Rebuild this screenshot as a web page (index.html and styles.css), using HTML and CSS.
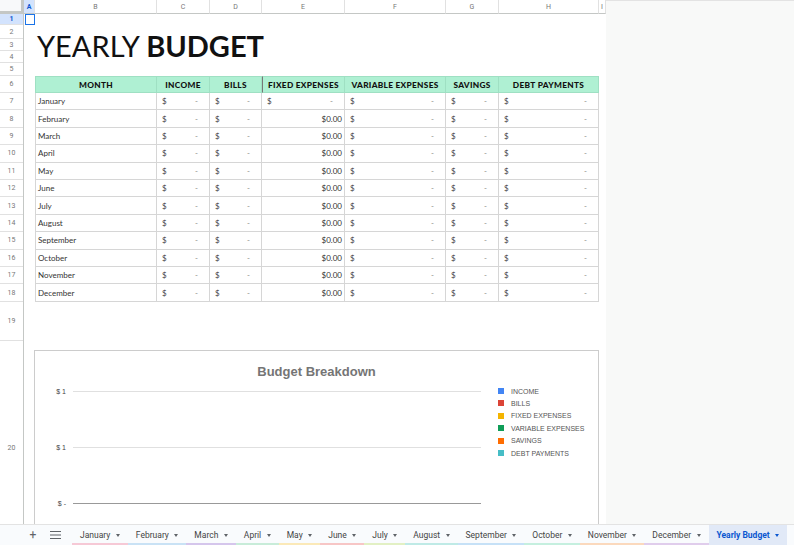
FILE: index.html
```html
<html>
  <head>
    <link rel="stylesheet" href="styles.css">
    <title>Yearly Budget</title>
  </head>
  <body>
    <div class="app">
      <div class="workspace">
        <div class="sheet">
          <div class="colbar">
            <div class="corner"></div>
            <div class="col sel-col" style="width:11px">A</div>
            <div class="col" style="width:122px">B</div>
            <div class="col" style="width:53px">C</div>
            <div class="col" style="width:52px">D</div>
            <div class="col" style="width:83px">E</div>
            <div class="col" style="width:101px">F</div>
            <div class="col" style="width:53px">G</div>
            <div class="col" style="width:100px">H</div>
            <div class="col" style="width:7px">I</div>
          </div>
          <div class="main">
            <div class="rowbar">
              <div class="rh sel-row" style="height:11px">1</div>
              <div class="rh" style="height:14px">2</div>
              <div class="rh" style="height:12px">3</div>
              <div class="rh" style="height:12px">4</div>
              <div class="rh" style="height:13px">5</div>
              <div class="rh" style="height:17px">6</div>
              <div class="rh data-h">7</div>
              <div class="rh data-h">8</div>
              <div class="rh data-h">9</div>
              <div class="rh data-h">10</div>
              <div class="rh data-h">11</div>
              <div class="rh data-h">12</div>
              <div class="rh data-h">13</div>
              <div class="rh data-h">14</div>
              <div class="rh data-h">15</div>
              <div class="rh data-h">16</div>
              <div class="rh data-h">17</div>
              <div class="rh data-h">18</div>
              <div class="rh" style="height:39px">19</div>
              <div class="rh" style="height:216px">20</div>
            </div>
            <div class="content">
              <div class="top">
                <div class="cursor"></div>
                <h1 class="title">YEARLY <b>BUDGET</b></h1>
              </div>

              <div class="budget">
                <div class="row head">
                  <div>MONTH</div><div>INCOME</div><div>BILLS</div><div class="fx">FIXED EXPENSES</div>
                  <div>VARIABLE EXPENSES</div><div>SAVINGS</div><div>DEBT PAYMENTS</div>
                </div>
                <div class="row">
                  <div class="m">January</div>
                  <div class="cur"><span>$</span><span>-</span></div>
                  <div class="cur"><span>$</span><span>-</span></div>
                  <div class="cur"><span>$</span><span>-</span></div>
                  <div class="cur"><span>$</span><span>-</span></div>
                  <div class="cur"><span>$</span><span>-</span></div>
                  <div class="cur"><span>$</span><span>-</span></div>
                </div>
                <div class="row">
                  <div class="m">February</div>
                  <div class="cur"><span>$</span><span>-</span></div>
                  <div class="cur"><span>$</span><span>-</span></div>
                  <div class="amt">$0.00</div>
                  <div class="cur"><span>$</span><span>-</span></div>
                  <div class="cur"><span>$</span><span>-</span></div>
                  <div class="cur"><span>$</span><span>-</span></div>
                </div>
                <div class="row">
                  <div class="m">March</div>
                  <div class="cur"><span>$</span><span>-</span></div>
                  <div class="cur"><span>$</span><span>-</span></div>
                  <div class="amt">$0.00</div>
                  <div class="cur"><span>$</span><span>-</span></div>
                  <div class="cur"><span>$</span><span>-</span></div>
                  <div class="cur"><span>$</span><span>-</span></div>
                </div>
                <div class="row">
                  <div class="m">April</div>
                  <div class="cur"><span>$</span><span>-</span></div>
                  <div class="cur"><span>$</span><span>-</span></div>
                  <div class="amt">$0.00</div>
                  <div class="cur"><span>$</span><span>-</span></div>
                  <div class="cur"><span>$</span><span>-</span></div>
                  <div class="cur"><span>$</span><span>-</span></div>
                </div>
                <div class="row">
                  <div class="m">May</div>
                  <div class="cur"><span>$</span><span>-</span></div>
                  <div class="cur"><span>$</span><span>-</span></div>
                  <div class="amt">$0.00</div>
                  <div class="cur"><span>$</span><span>-</span></div>
                  <div class="cur"><span>$</span><span>-</span></div>
                  <div class="cur"><span>$</span><span>-</span></div>
                </div>
                <div class="row">
                  <div class="m">June</div>
                  <div class="cur"><span>$</span><span>-</span></div>
                  <div class="cur"><span>$</span><span>-</span></div>
                  <div class="amt">$0.00</div>
                  <div class="cur"><span>$</span><span>-</span></div>
                  <div class="cur"><span>$</span><span>-</span></div>
                  <div class="cur"><span>$</span><span>-</span></div>
                </div>
                <div class="row">
                  <div class="m">July</div>
                  <div class="cur"><span>$</span><span>-</span></div>
                  <div class="cur"><span>$</span><span>-</span></div>
                  <div class="amt">$0.00</div>
                  <div class="cur"><span>$</span><span>-</span></div>
                  <div class="cur"><span>$</span><span>-</span></div>
                  <div class="cur"><span>$</span><span>-</span></div>
                </div>
                <div class="row">
                  <div class="m">August</div>
                  <div class="cur"><span>$</span><span>-</span></div>
                  <div class="cur"><span>$</span><span>-</span></div>
                  <div class="amt">$0.00</div>
                  <div class="cur"><span>$</span><span>-</span></div>
                  <div class="cur"><span>$</span><span>-</span></div>
                  <div class="cur"><span>$</span><span>-</span></div>
                </div>
                <div class="row">
                  <div class="m">September</div>
                  <div class="cur"><span>$</span><span>-</span></div>
                  <div class="cur"><span>$</span><span>-</span></div>
                  <div class="amt">$0.00</div>
                  <div class="cur"><span>$</span><span>-</span></div>
                  <div class="cur"><span>$</span><span>-</span></div>
                  <div class="cur"><span>$</span><span>-</span></div>
                </div>
                <div class="row">
                  <div class="m">October</div>
                  <div class="cur"><span>$</span><span>-</span></div>
                  <div class="cur"><span>$</span><span>-</span></div>
                  <div class="amt">$0.00</div>
                  <div class="cur"><span>$</span><span>-</span></div>
                  <div class="cur"><span>$</span><span>-</span></div>
                  <div class="cur"><span>$</span><span>-</span></div>
                </div>
                <div class="row">
                  <div class="m">November</div>
                  <div class="cur"><span>$</span><span>-</span></div>
                  <div class="cur"><span>$</span><span>-</span></div>
                  <div class="amt">$0.00</div>
                  <div class="cur"><span>$</span><span>-</span></div>
                  <div class="cur"><span>$</span><span>-</span></div>
                  <div class="cur"><span>$</span><span>-</span></div>
                </div>
                <div class="row">
                  <div class="m">December</div>
                  <div class="cur"><span>$</span><span>-</span></div>
                  <div class="cur"><span>$</span><span>-</span></div>
                  <div class="amt">$0.00</div>
                  <div class="cur"><span>$</span><span>-</span></div>
                  <div class="cur"><span>$</span><span>-</span></div>
                  <div class="cur"><span>$</span><span>-</span></div>
                </div>
              </div>

              <div class="spacer"></div>

              <div class="chart-row">
                <div class="chart">
                  <div class="chart-title">Budget Breakdown</div>
                  <div class="chart-body">
                    <div class="plot">
                      <div class="tick"><span class="lbl">$ 1</span><span class="line"></span></div>
                      <div class="tick"><span class="lbl">$ 1</span><span class="line"></span></div>
                      <div class="tick base"><span class="lbl">$ -</span><span class="line"></span></div>
                    </div>
                    <ul class="legend">
                      <li><i class="sw blue"></i>INCOME</li>
                      <li><i class="sw red"></i>BILLS</li>
                      <li><i class="sw yellow"></i>FIXED EXPENSES</li>
                      <li><i class="sw green"></i>VARIABLE EXPENSES</li>
                      <li><i class="sw orange"></i>SAVINGS</li>
                      <li><i class="sw teal"></i>DEBT PAYMENTS</li>
                    </ul>
                  </div>
                </div>
              </div>
            </div>
          </div>
        </div>
        <div class="gutter"></div>
      </div>

      <div class="tabs">
        <div class="btn">+</div>
        <div class="btn menu">
          <svg width="11" height="8" viewBox="0 0 11 8"><path d="M0 .5h11M0 4h11M0 7.5h11" stroke="#5f6368" stroke-width="1.2"/></svg>
        </div>
        <div class="tab pink">January <span class="caret"></span></div>
        <div class="tab lblue">February <span class="caret"></span></div>
        <div class="tab purple">March <span class="caret"></span></div>
        <div class="tab mint">April <span class="caret"></span></div>
        <div class="tab cream">May <span class="caret"></span></div>
        <div class="tab rose">June <span class="caret"></span></div>
        <div class="tab lime">July <span class="caret"></span></div>
        <div class="tab aqua">August <span class="caret"></span></div>
        <div class="tab sky">September <span class="caret"></span></div>
        <div class="tab seafoam">October <span class="caret"></span></div>
        <div class="tab peach">November <span class="caret"></span></div>
        <div class="tab lilac">December <span class="caret"></span></div>
        <div class="tab active">Yearly Budget <span class="caret"></span></div>
      </div>
    </div>
  </body>
</html>
```

FILE: styles.css
```css
body {
  margin: 0;
  font-family: Roboto, "Liberation Sans", sans-serif;
  background: #fff;
}
.app {
  height: 545px;
  display: flex;
  flex-direction: column;
  overflow: hidden;
}
.workspace {
  flex: 1;
  display: flex;
  overflow: hidden;
}
.sheet {
  width: 606px;
  display: flex;
  flex-direction: column;
}
.gutter {
  flex: 1;
  background: #f8f9f8;
  border-top: 1px solid #e3e3e3;
}

/* column + row headers */
.colbar {
  display: flex;
  height: 14px;
  flex-shrink: 0;
}
.corner {
  width: 24px;
  box-sizing: border-box;
  border-right: 3px solid #c4c7c5;
  border-bottom: 3px solid #c4c7c5;
  background: #f8f9fa;
}
.col {
  box-sizing: border-box;
  border-right: 1px solid #e1e1e1;
  border-bottom: 1px solid #c4c7c5;
  font-size: 7px;
  color: #777;
  display: flex;
  align-items: center;
  justify-content: center;
}
.col.sel-col {
  background: #d3e3fd;
  color: #0b57d0;
  font-weight: bold;
}
.main {
  display: flex;
  flex: 1;
}
.rowbar {
  width: 24px;
  flex-shrink: 0;
  box-sizing: border-box;
  border-right: 1px solid #c4c7c5;
}
.rh {
  box-sizing: border-box;
  border-bottom: 1px solid #e1e1e1;
  font-size: 7px;
  color: #777;
  display: flex;
  align-items: center;
  justify-content: center;
}
.rh.sel-row {
  background: #d3e3fd;
  color: #0b57d0;
  font-weight: bold;
}
.rh.data-h {
  height: 17.42px;
}

.content {
  flex: 1;
  display: flex;
  flex-direction: column;
  font-family: Lato, "Open Sans", sans-serif;
}

/* title block, rows 1-5 */
.top {
  height: 62px;
  display: grid;
  grid-template-columns: 11px 1fr;
  grid-template-rows: 11px 38px 13px;
}
.cursor {
  box-sizing: border-box;
  border: 1px solid #1a73e8;
  margin: 0 0 0 1px;
}
.title {
  grid-column: 2;
  grid-row: 2;
  margin: 6px 0 0 2px;
  align-self: start;
  font-size: 29px;
  line-height: 29px;
  font-weight: 400;
  letter-spacing: 0;
  color: #111;
}
.title b {
  font-weight: 700;
}

/* budget table, rows 6-18 */
.budget {
  margin-left: 11px;
  width: 564px;
}
.row {
  display: grid;
  grid-template-columns: 122px 53px 52px 83px 101px 53px 100px;
  height: 17.42px;
  font-size: 8px;
  color: #333;
}
.row > div {
  box-sizing: border-box;
  border-right: 1px solid #d6d6d6;
  border-bottom: 1px solid #d6d6d6;
  display: flex;
  align-items: center;
}
.row > div:first-child {
  border-left: 1px solid #d6d6d6;
}
.row.head {
  height: 17px;
  background: #aff0d3;
  font-size: 8.3px;
  font-weight: 900;
  letter-spacing: 0.3px;
  color: #111;
}
.row.head > div {
  justify-content: center;
  border-color: #9fe0c3;
  border-top: 1px solid #9fe0c3;
}
.row.head > div.fx {
  border-left: 1px solid #777;
}
.m {
  padding-left: 2px;
}
.cur {
  justify-content: space-between;
  padding: 0 11px 0 5px;
}
.cur span:first-child {
  color: #444;
}
.cur span:last-child {
  color: #888;
}
.amt {
  justify-content: flex-end;
  padding-right: 2px;
}

.spacer {
  height: 39px;
}

/* chart, row 20 */
.chart-row {
  padding: 9px 0 0 10px;
}
.chart {
  width: 565px;
  height: 200px;
  box-sizing: border-box;
  border: 1px solid #ccc;
  font-family: "Liberation Sans", Arial, sans-serif;
}
.chart-title {
  text-align: center;
  font-size: 13px;
  line-height: 15px;
  font-weight: bold;
  color: #757575;
  margin-top: 13px;
}
.chart-body {
  display: flex;
  margin-top: 6px;
}
.plot {
  width: 446px;
  padding-top: 2px;
  display: flex;
  flex-direction: column;
  gap: 46px;
}
.tick {
  height: 10px;
  display: flex;
  align-items: center;
}
.lbl {
  width: 31px;
  text-align: right;
  margin-right: 7px;
  font-size: 7px;
  color: #444;
}
.line {
  flex: 1;
  height: 1px;
  background: #e0e0e0;
}
.tick.base .line {
  background: #999;
}
.legend {
  list-style: none;
  margin: 0 0 0 17px;
  padding: 0;
}
.legend li {
  height: 12.4px;
  display: flex;
  align-items: center;
  font-size: 7px;
  color: #555;
}
.sw {
  width: 6px;
  height: 6px;
  margin-right: 7px;
}
.blue { background: #4285f4; }
.red { background: #db4437; }
.yellow { background: #f4b400; }
.green { background: #0f9d58; }
.orange { background: #ff6d01; }
.teal { background: #46bdc6; }

/* sheet tabs */
.tabs {
  height: 20px;
  flex-shrink: 0;
  display: flex;
  align-items: stretch;
  background: #f9fbfd;
  border-top: 1px solid #e3e3e3;
  padding-left: 25px;
  font-size: 8.5px;
  color: #444;
}
.btn {
  width: 16px;
  display: flex;
  align-items: center;
  justify-content: center;
  font-size: 12px;
  color: #5f6368;
}
.btn.menu {
  margin-left: 6px;
  margin-right: 9px;
}
.tab {
  display: flex;
  align-items: center;
  gap: 5.5px;
  padding: 2px 8px 0;
  border-bottom: 2px solid transparent;
  white-space: nowrap;
}
.caret {
  width: 0;
  height: 0;
  border-left: 2.5px solid transparent;
  border-right: 2.5px solid transparent;
  border-top: 3px solid #5f6368;
}
.tab.active {
  background: #e1e9f7;
  color: #0b57d0;
  font-weight: bold;
}
.tab.active .caret {
  border-top-color: #0b57d0;
}
.pink { border-bottom-color: #f6c9d6; }
.lblue { border-bottom-color: #c9e2f5; }
.purple { border-bottom-color: #d5c6ec; }
.mint { border-bottom-color: #c8ecd9; }
.cream { border-bottom-color: #fbe9b8; }
.rose { border-bottom-color: #f7c6c6; }
.lime { border-bottom-color: #e2f0c4; }
.aqua { border-bottom-color: #bfeae6; }
.sky { border-bottom-color: #c6e1f7; }
.seafoam { border-bottom-color: #c5efdf; }
.peach { border-bottom-color: #fbd9bd; }
.lilac { border-bottom-color: #e0cdec; }
```
